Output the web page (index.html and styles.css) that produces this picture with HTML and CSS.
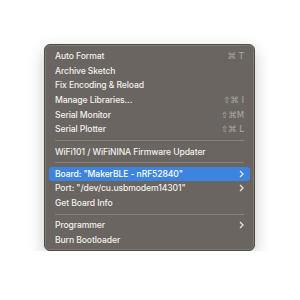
FILE: index.html
```html
<!DOCTYPE html>
<html lang="en">
  <head>
    <meta charset="UTF-8">
    <title>Tools Menu</title>
    <link rel="stylesheet" href="styles.css">
  </head>
  <body>
    <div class="menu">
      <div class="item"><span>Auto Format</span><span class="key">⌘ T</span></div>
      <div class="item"><span>Archive Sketch</span></div>
      <div class="item"><span>Fix Encoding &amp; Reload</span></div>
      <div class="item"><span>Manage Libraries...</span><span class="key">⇧⌘ I</span></div>
      <div class="item"><span>Serial Monitor</span><span class="key">⇧⌘M</span></div>
      <div class="item"><span>Serial Plotter</span><span class="key">⇧⌘ L</span></div>
      <div class="sep"></div>
      <div class="item"><span>WiFi101 / WiFiNINA Firmware Updater</span></div>
      <div class="sep"></div>
      <div class="item active">
        <span>Board: "MakerBLE - nRF52840"</span>
        <svg class="chev" width="5" height="8" viewBox="0 0 5 8"><path d="M1 1l3 3-3 3" fill="none" stroke="currentColor" stroke-width="1.3"/></svg>
      </div>
      <div class="item">
        <span>Port: "/dev/cu.usbmodem14301"</span>
        <svg class="chev" width="5" height="8" viewBox="0 0 5 8"><path d="M1 1l3 3-3 3" fill="none" stroke="currentColor" stroke-width="1.3"/></svg>
      </div>
      <div class="item"><span>Get Board Info</span></div>
      <div class="sep"></div>
      <div class="item">
        <span>Programmer</span>
        <svg class="chev" width="5" height="8" viewBox="0 0 5 8"><path d="M1 1l3 3-3 3" fill="none" stroke="currentColor" stroke-width="1.3"/></svg>
      </div>
      <div class="item"><span>Burn Bootloader</span></div>
    </div>
  </body>
</html>
```

FILE: styles.css
```css
body {
  margin: 0;
  padding: 44px 0 0 44px;
  background-color: #fff;
  font-family: "Inter", "DejaVu Sans", sans-serif;
}

.menu {
  width: 211px;
  box-sizing: border-box;
  padding: 4px 4px 3px;
  background-color: #6a6560;
  border: 1px solid #4e4a46;
  border-radius: 6px;
  box-shadow: inset 0 0 0 1px #807b76, 0 6px 16px rgba(0, 0, 0, 0.22);
}

.item {
  display: flex;
  align-items: center;
  justify-content: space-between;
  height: 14.6px;
  padding: 0 6px;
  border-radius: 3px;
  color: #f2f0ee;
  font-size: 8.6px;
  font-weight: 500;
  letter-spacing: -0.1px;
  white-space: nowrap;
}

.item.active {
  background-color: #3c84df;
  color: #fff;
}

.key {
  color: #aeaaa5;
  font-family: "DejaVu Sans", sans-serif;
  font-size: 8.5px;
  letter-spacing: 0;
}

.chev {
  color: #e8e6e4;
}

.sep {
  height: 1px;
  margin: 3.4px 6px 3.3px;
  background-color: #86817c;
}
```
